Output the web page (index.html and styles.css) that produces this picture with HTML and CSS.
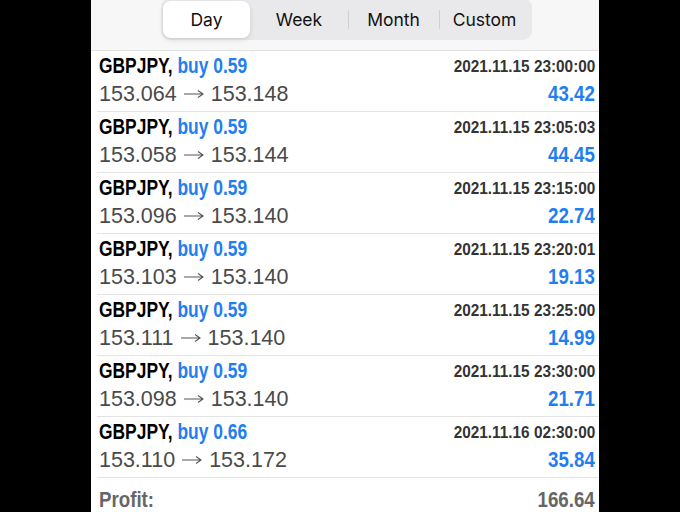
FILE: index.html
```html
<!DOCTYPE html>
<html lang="en">
<head>
  <meta charset="UTF-8">
  <title>History</title>
  <link rel="stylesheet" href="styles.css">
</head>
<body>
  <div class="panel">
    <div class="header">
      <div class="segments">
        <div class="seg active">Day</div>
        <div class="seg week">Week</div>
        <div class="seg sep">Month</div>
        <div class="seg sep">Custom</div>
      </div>
    </div>

    <div class="list">
      <div class="deal">
        <div class="line"><span class="sym">GBPJPY, <span class="side">buy 0.59</span></span><span class="time">2021.11.15 23:00:00</span></div>
        <div class="line"><span class="price">153.064<svg class="arrow" viewBox="0 0 20 10"><path d="M0 5H19M14 1.5L19 5L14 8.5"/></svg>153.148</span><span class="profit">43.42</span></div>
      </div>
      <div class="deal">
        <div class="line"><span class="sym">GBPJPY, <span class="side">buy 0.59</span></span><span class="time">2021.11.15 23:05:03</span></div>
        <div class="line"><span class="price">153.058<svg class="arrow" viewBox="0 0 20 10"><path d="M0 5H19M14 1.5L19 5L14 8.5"/></svg>153.144</span><span class="profit">44.45</span></div>
      </div>
      <div class="deal">
        <div class="line"><span class="sym">GBPJPY, <span class="side">buy 0.59</span></span><span class="time">2021.11.15 23:15:00</span></div>
        <div class="line"><span class="price">153.096<svg class="arrow" viewBox="0 0 20 10"><path d="M0 5H19M14 1.5L19 5L14 8.5"/></svg>153.140</span><span class="profit">22.74</span></div>
      </div>
      <div class="deal">
        <div class="line"><span class="sym">GBPJPY, <span class="side">buy 0.59</span></span><span class="time">2021.11.15 23:20:01</span></div>
        <div class="line"><span class="price">153.103<svg class="arrow" viewBox="0 0 20 10"><path d="M0 5H19M14 1.5L19 5L14 8.5"/></svg>153.140</span><span class="profit">19.13</span></div>
      </div>
      <div class="deal">
        <div class="line"><span class="sym">GBPJPY, <span class="side">buy 0.59</span></span><span class="time">2021.11.15 23:25:00</span></div>
        <div class="line"><span class="price">153.111<svg class="arrow" viewBox="0 0 20 10"><path d="M0 5H19M14 1.5L19 5L14 8.5"/></svg>153.140</span><span class="profit">14.99</span></div>
      </div>
      <div class="deal">
        <div class="line"><span class="sym">GBPJPY, <span class="side">buy 0.59</span></span><span class="time">2021.11.15 23:30:00</span></div>
        <div class="line"><span class="price">153.098<svg class="arrow" viewBox="0 0 20 10"><path d="M0 5H19M14 1.5L19 5L14 8.5"/></svg>153.140</span><span class="profit">21.71</span></div>
      </div>
      <div class="deal">
        <div class="line"><span class="sym">GBPJPY, <span class="side">buy 0.66</span></span><span class="time">2021.11.16 02:30:00</span></div>
        <div class="line"><span class="price">153.110<svg class="arrow" viewBox="0 0 20 10"><path d="M0 5H19M14 1.5L19 5L14 8.5"/></svg>153.172</span><span class="profit">35.84</span></div>
      </div>
      <div class="total">
        <span class="total-label">Profit:</span><span class="total-value">166.64</span>
      </div>
    </div>
  </div>
</body>
</html>
```

FILE: styles.css
```css
html, body {
  margin: 0;
  height: 100%;
  background: #000;
}
body {
  font-family: 'Liberation Sans', Arial, sans-serif;
  overflow: hidden;
}
.panel {
  width: 508px;
  height: 512px;
  margin-left: 91px;
  background: #fff;
}
.header {
  height: 50px;
  background: #f7f7f7;
  border-bottom: 1px solid #e2e2e2;
  display: flex;
  justify-content: center;
  align-items: flex-start;
}
.segments {
  display: flex;
  height: 42px;
  margin-top: -2px;
  margin-left: 3px;
  padding: 3px 2px 2px;
  box-sizing: border-box;
  background: #e9e9eb;
  border-radius: 9px;
}
.seg {
  width: 91px;
  display: flex;
  align-items: center;
  justify-content: center;
  font-family: Inter, 'Liberation Sans', sans-serif;
  font-size: 17.5px;
  color: #111;
  position: relative;
  border-radius: 8px;
}
.seg.week {
  width: 98px;
}
.seg.sep::before {
  content: "";
  position: absolute;
  left: 0;
  top: 9px;
  bottom: 9px;
  width: 1px;
  background: #d0d0d2;
}
.seg.active {
  width: 87px;
  background: #fff;
  box-shadow: 0 2px 5px rgba(0,0,0,0.12);
}
.list {
  padding-left: 6px;
}
.deal {
  padding: 1px 4px 3px 2px;
  border-bottom: 1px solid #e4e4e4;
}
.line {
  display: flex;
  justify-content: space-between;
  align-items: center;
  height: 28px;
}
.sym, .time, .profit, .total span {
  display: inline-block;
  font-weight: bold;
  white-space: nowrap;
}
.sym {
  font-size: 21.5px;
  color: #000;
  transform: scaleX(0.81);
  transform-origin: left center;
}
.side, .profit {
  color: #1f7ef0;
}
.time {
  font-size: 16.5px;
  color: #333;
  transform: scaleX(0.93);
  transform-origin: right center;
}
.price {
  display: flex;
  align-items: center;
  font-size: 21.5px;
  color: #4a4a4a;
}
.arrow {
  width: 20px;
  height: 10px;
  margin: 0 7px 0 7px;
  fill: none;
  stroke: #555;
  stroke-width: 1.1;
}
.profit {
  font-size: 21.5px;
  transform: scaleX(0.87);
  transform-origin: right center;
}
.total {
  display: flex;
  justify-content: space-between;
  align-items: center;
  height: 44px;
  padding: 0 4px 0 2px;
  font-size: 21.5px;
  color: #666;
}
.total-label {
  transform: scaleX(0.87);
  transform-origin: left center;
}
.total-value {
  transform: scaleX(0.87);
  transform-origin: right center;
}
```
